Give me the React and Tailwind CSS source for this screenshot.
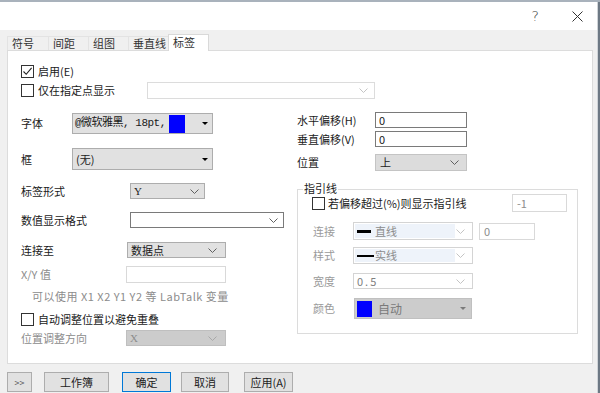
import React from "react";

function Chev({ c = "#606060" }) {
  return (
    <svg width="9" height="5" viewBox="0 0 9 5">
      <path d="M0.5 0.5 L4.5 4.5 L8.5 0.5" fill="none" stroke={c} strokeWidth="1" />
    </svg>
  );
}

function Tri({ c = "#000" }) {
  return (
    <svg width="6" height="3" viewBox="0 0 6 3">
      <path d="M0 0 H6 L3 3 Z" fill={c} />
    </svg>
  );
}

function Box({ checked }) {
  return (
    <div className="w-[13px] h-[13px] border border-[#333333] bg-white flex items-center justify-center shrink-0">
      {checked && (
        <svg width="11" height="11" viewBox="0 0 11 11">
          <path d="M1.5 5.5 L4.2 8.3 L9.6 1.8" fill="none" stroke="#222" strokeWidth="1.1" />
        </svg>
      )}
    </div>
  );
}

function Btn({ w, children, primary }) {
  return (
    <div
      className={
        "h-[20px] flex items-center justify-center bg-[#e1e1e1] border text-[11px] text-[#222] " +
        (primary ? "border-[#0078d7] " : "border-[#adadad] ") +
        w
      }
    >
      {children}
    </div>
  );
}

export default function App() {
  return (
    <div className="w-[600px] h-[393px] overflow-hidden flex flex-col bg-[#7f8b97] font-['Noto_Sans_CJK_SC',sans-serif] text-[11px] text-[#1a1a1a] leading-none">
      <div className="h-[2px] bg-[#a9b2bc]" />
      <div className="flex flex-1">
        <div className="w-[597px] flex flex-col bg-[#f0f0f0]">
          {/* title bar */}
          <div className="h-[28px] bg-white flex items-center justify-end">
            <span className="text-[14px] text-[#333] mr-[33px] font-['DejaVu_Sans',sans-serif] font-light">?</span>
            <svg width="11" height="11" viewBox="0 0 11 11" className="mr-[14px]">
              <path d="M0.5 0.5 L10.5 10.5 M10.5 0.5 L0.5 10.5" stroke="#333" strokeWidth="1" />
            </svg>
          </div>

          {/* body */}
          <div className="flex-1 flex flex-col pl-[7px] pr-[4px] pt-[4px]">
            {/* tabs */}
            <div className="flex items-end h-[16px]">
              {["符号", "间距", "组图", "垂直线"].map((t, i) => (
                <div
                  key={t}
                  className={
                    "h-[14px] border-t border-l border-[#e3e3e3] flex items-center pl-[4px] text-[#333] " +
                    (i === 0 ? "w-[41px]" : "w-[40px]")
                  }
                >
                  {t}
                </div>
              ))}
              <div className="relative z-10 w-[41px] h-[17px] -mb-px bg-white border border-b-0 border-[#d9d9d9] flex items-center pl-[4px] pb-[1px] text-[#333]">
                标签
              </div>
            </div>

            {/* panel */}
            <div className="h-[314px] bg-white border border-[#dcdcdc] pl-[13px] pt-[14px] flex flex-col">
              <div className="flex items-center h-[13px] gap-[4px]">
                <Box checked />
                <span>启用(E)</span>
              </div>
              <div className="flex items-center h-[17px] mt-[4px]">
                <div className="w-[126px] flex items-center gap-[4px]">
                  <Box />
                  <span>仅在指定点显示</span>
                </div>
                <div className="w-[228px] h-[17px] border border-[#dcdcdc] flex items-center justify-end pr-[6px]">
                  <Chev c="#c4c4c4" />
                </div>
              </div>

              <div className="flex mt-[13px]">
                {/* left column */}
                <div className="w-[276px] flex flex-col">
                  <div className="flex items-center h-[21px] mt-[1px]">
                    <span className="w-[51px]">字体</span>
                    <div className="w-[141px] h-[21px] bg-[#e1e1e1] border border-[#adadad] flex items-center pl-[2px] pr-[4px]">
                      <span className="font-['Liberation_Mono','Noto_Sans_CJK_SC',monospace] text-[11px] tracking-[-0.5px]">@微软雅黑, 18pt,</span>
                      <div className="w-[16px] h-[18px] bg-[#0000ff] ml-[3px]" />
                      <div className="flex-1" />
                      <Tri />
                    </div>
                  </div>
                  <div className="flex items-center h-[22px] mt-[14px]">
                    <span className="w-[51px]">框</span>
                    <div className="w-[141px] h-[22px] bg-[#e1e1e1] border border-[#adadad] flex items-center pl-[3px] pr-[4px]">
                      <span>(无)</span>
                      <div className="flex-1" />
                      <Tri />
                    </div>
                  </div>
                  <div className="flex items-center h-[16px] mt-[13px]">
                    <span className="w-[109px]">标签形式</span>
                    <div className="w-[75px] h-[16px] bg-[#e1e1e1] border border-[#adadad] flex items-center pl-[3px] pr-[5px]">
                      <span className="font-['Liberation_Serif',serif]">Y</span>
                      <div className="flex-1" />
                      <Chev />
                    </div>
                  </div>
                  <div className="flex items-center h-[16px] mt-[13px]">
                    <span className="w-[109px]">数值显示格式</span>
                    <div className="w-[154px] h-[16px] bg-white border border-[#7a7a7a] flex items-center justify-end pr-[5px]">
                      <Chev />
                    </div>
                  </div>
                  <div className="flex items-center h-[16px] mt-[14px]">
                    <span className="w-[106px]">连接至</span>
                    <div className="w-[99px] h-[16px] bg-[#e1e1e1] border border-[#adadad] flex items-center pl-[3px] pr-[8px]">
                      <span>数据点</span>
                      <div className="flex-1" />
                      <Chev />
                    </div>
                  </div>
                  <div className="flex items-center h-[17px] mt-[8px]">
                    <span className="w-[105px] text-[#8c8c8c]">X/Y 值</span>
                    <div className="w-[100px] h-[17px] bg-white border border-[#d9d9d9]" />
                  </div>
                  <div className="h-[12px] mt-[7px] pl-[11px] flex items-center text-[#8c8c8c] tracking-[0.5px]">
                    可以使用 X1 X2 Y1 Y2 等 LabTalk 变量
                  </div>
                  <div className="flex items-center h-[13px] mt-[11px] gap-[4px]">
                    <Box />
                    <span>自动调整位置以避免重叠</span>
                  </div>
                  <div className="flex items-center h-[16px] mt-[4px]">
                    <span className="w-[105px] text-[#8c8c8c]">位置调整方向</span>
                    <div className="w-[100px] h-[16px] bg-[#cccccc] border border-[#bfbfbf] flex items-center pl-[3px] pr-[8px] text-[#8c8c8c]">
                      <span className="font-['Liberation_Serif',serif]">X</span>
                      <div className="flex-1" />
                      <Chev c="#a8a8a8" />
                    </div>
                  </div>
                </div>

                {/* right column */}
                <div className="w-[281px] flex flex-col">
                  <div className="flex items-center h-[16px]">
                    <span className="w-[78px]">水平偏移(H)</span>
                    <div className="w-[92px] h-[16px] border border-[#7a7a7a] flex items-center pl-[3px]">0</div>
                  </div>
                  <div className="flex items-center h-[16px] mt-[3px]">
                    <span className="w-[78px]">垂直偏移(V)</span>
                    <div className="w-[92px] h-[16px] border border-[#7a7a7a] flex items-center pl-[3px]">0</div>
                  </div>
                  <div className="flex items-center h-[17px] mt-[7px]">
                    <span className="w-[78px]">位置</span>
                    <div className="w-[92px] h-[17px] bg-[#dcdcdc] border border-[#c4c4c4] flex items-center pl-[4px] pr-[7px]">
                      <span>上</span>
                      <div className="flex-1" />
                      <Chev />
                    </div>
                  </div>

                  {/* group box */}
                  <div className="relative mt-[18px] h-[145px] border border-[#dcdcdc] flex flex-col">
                    <span className="absolute -top-[7px] left-[5px] bg-white px-[1px]">指引线</span>
                    <div className="flex items-center h-[18px] mt-[4px] pl-[14px]">
                      <div className="w-[200px] flex items-center gap-[3px]">
                        <Box />
                        <span>若偏移超过(%)则显示指引线</span>
                      </div>
                      <div className="w-[55px] h-[18px] border border-[#d9d9d9] flex items-center pl-[4px] text-[#8c8c8c]">-1</div>
                    </div>
                    <div className="flex items-center h-[18px] mt-[10px] pl-[15px]">
                      <span className="w-[40px] text-[#9a9a9a]">连接</span>
                      <div className="w-[120px] h-[18px] border border-[#d4d4d4] flex items-center p-[1px] pr-[7px]">
                        <div className="w-[100px] h-[14px] bg-[#eef3fa] flex items-center pl-[2px] gap-[4px] text-[#8c8c8c]">
                          <div className="w-[14px] h-[3px] bg-black" />
                          <span>直线</span>
                        </div>
                        <div className="flex-1" />
                        <Chev c="#c4c4c4" />
                      </div>
                      <div className="w-[56px] h-[17px] ml-[6px] border border-[#d9d9d9] flex items-center pl-[4px] text-[#8c8c8c]">0</div>
                    </div>
                    <div className="flex items-center h-[17px] mt-[7px] pl-[15px]">
                      <span className="w-[40px] text-[#9a9a9a]">样式</span>
                      <div className="w-[120px] h-[17px] border border-[#d4d4d4] flex items-center p-[1px] pr-[7px]">
                        <div className="w-[100px] h-[13px] bg-[#eef3fa] flex items-center pl-[2px] gap-[1px] text-[#8c8c8c]">
                          <div className="w-[17px] h-[2px] bg-black" />
                          <span>实线</span>
                        </div>
                        <div className="flex-1" />
                        <Chev c="#c4c4c4" />
                      </div>
                    </div>
                    <div className="flex items-center h-[16px] mt-[9px] pl-[15px]">
                      <span className="w-[40px] text-[#9a9a9a]">宽度</span>
                      <div className="w-[120px] h-[16px] border border-[#d4d4d4] flex items-center pl-[3px] pr-[7px] text-[#808080]">
                        <span className="tracking-[2px]">0.5</span>
                        <div className="flex-1" />
                        <Chev c="#c4c4c4" />
                      </div>
                    </div>
                    <div className="flex items-center h-[21px] mt-[9px] pl-[15px]">
                      <span className="w-[41px] text-[#9a9a9a]">颜色</span>
                      <div className="w-[118px] h-[21px] bg-[#cccccc] border border-[#c0c0c0] flex items-center pl-[2px] pr-[5px] text-[#7a7a7a]">
                        <div className="w-[15px] h-[16px] bg-[#0000ff]" />
                        <span className="ml-[6px] text-[12px]">自动</span>
                        <div className="flex-1" />
                        <Tri c="#7a7a7a" />
                      </div>
                    </div>
                  </div>
                </div>
              </div>
            </div>

            {/* buttons */}
            <div className="flex items-center mt-[8px]">
              <Btn w="w-[25px]"><span className="text-[9px] text-[#555]">&gt;&gt;</span></Btn>
              <div className="w-[12px]" />
              <Btn w="w-[65px]">工作簿</Btn>
              <div className="w-[13px]" />
              <Btn w="w-[49px]" primary>确定</Btn>
              <div className="w-[10px]" />
              <Btn w="w-[48px]">取消</Btn>
              <div className="w-[15px]" />
              <Btn w="w-[49px]">应用(A)</Btn>
            </div>
          </div>
        </div>
        <div className="w-[1px] bg-[#d0d4d8]" />
        <div className="w-[2px] bg-[#6d7884]" />
      </div>
    </div>
  );
}
